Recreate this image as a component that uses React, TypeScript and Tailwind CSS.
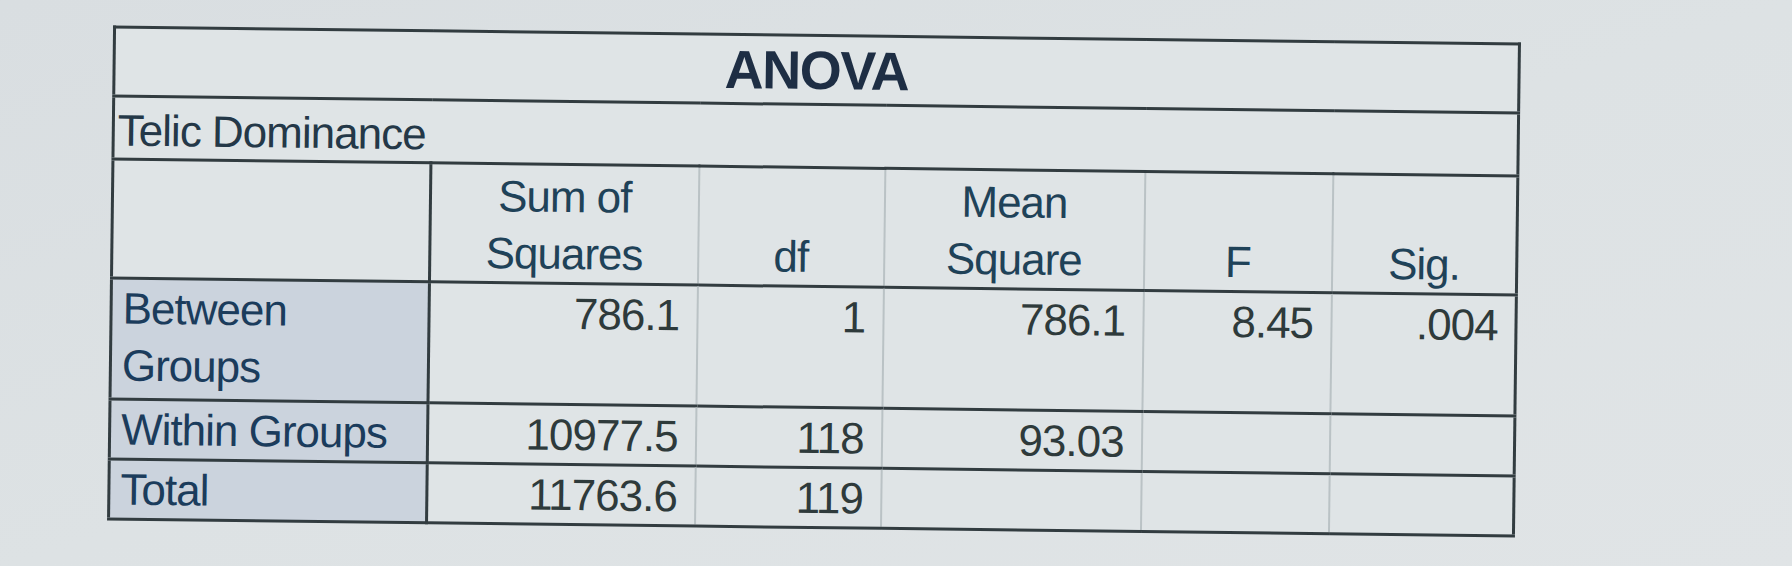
const rows = [
  { label: ['Between', 'Groups'], sum: '786.1', df: '1', mean: '786.1', f: '8.45', sig: '.004', h: 'h-[121px]' },
  { label: ['Within Groups'], sum: '10977.5', df: '118', mean: '93.03', f: '', sig: '', h: 'h-[58px]' },
  { label: ['Total'], sum: '11763.6', df: '119', mean: '', f: '', sig: '', h: 'h-[59px]' },
]

const headers = [
  ['Sum of', 'Squares'],
  ['df'],
  ['Mean', 'Square'],
  ['F'],
  ['Sig.'],
]

export default function App() {
  return (
    <div className="h-[566px] w-full overflow-hidden bg-gradient-to-br from-[#d9dee1] via-[#dde2e4] to-[#e0e4e6] pl-[110px] pt-[34px] font-['Liberation_Sans',Arial,sans-serif]">
      <table className="w-[1405px] table-fixed border-collapse border-[3px] border-[#323c40] bg-[#dfe4e6] rotate-[0.7deg]">
        <colgroup>
          <col className="w-[318px]" />
          <col className="w-[268px]" />
          <col className="w-[186px]" />
          <col className="w-[260px]" />
          <col className="w-[188px]" />
          <col className="w-[185px]" />
        </colgroup>
        <tbody>
          <tr className="h-[69px]">
            <td colSpan={6} className="border-b-[3px] border-[#323c40] text-center align-middle text-[54px] font-bold leading-none tracking-[-1.5px] text-[#1e2e44]">
              ANOVA
            </td>
          </tr>
          <tr className="h-[63px]">
            <td colSpan={6} className="border-b-[3px] border-[#323c40] pb-[3px] pl-[3px] align-bottom text-[44px] leading-[48px] tracking-[-1px] text-[#243848]">
              Telic Dominance
            </td>
          </tr>
          <tr className="h-[119px]">
            <td className="border-r-[3px] border-b-[3px] border-[#323c40]" />
            {headers.map((h, i) => (
              <td
                key={i}
                className="border-b-[3px] border-b-[#323c40] border-r-2 border-r-[#bac2c5] text-center align-bottom text-[44px] leading-[57px] tracking-[-1px] text-[#1f4258]"
              >
                {h.map((line, j) => (
                  <div key={j}>{line}</div>
                ))}
              </td>
            ))}
          </tr>
          {rows.map((r, i) => (
            <tr key={i} className={r.h}>
              <td className="border-r-[3px] border-b-[3px] border-[#323c40] bg-[#cbd3dd] pl-[10px] align-top text-[44px] leading-[57px] tracking-[-1px] text-[#1b3c5c]">
                {r.label.map((line, j) => (
                  <div key={j}>{line}</div>
                ))}
              </td>
              {[r.sum, r.df, r.mean, r.f, r.sig].map((v, j) => (
                <td
                  key={j}
                  className="border-b-[3px] border-b-[#323c40] border-r-2 border-r-[#bac2c5] pr-[17px] text-right align-top text-[44px] leading-[57px] tracking-[-1px] text-[#2e3a3b]"
                >
                  {v}
                </td>
              ))}
            </tr>
          ))}
        </tbody>
      </table>
    </div>
  )
}
